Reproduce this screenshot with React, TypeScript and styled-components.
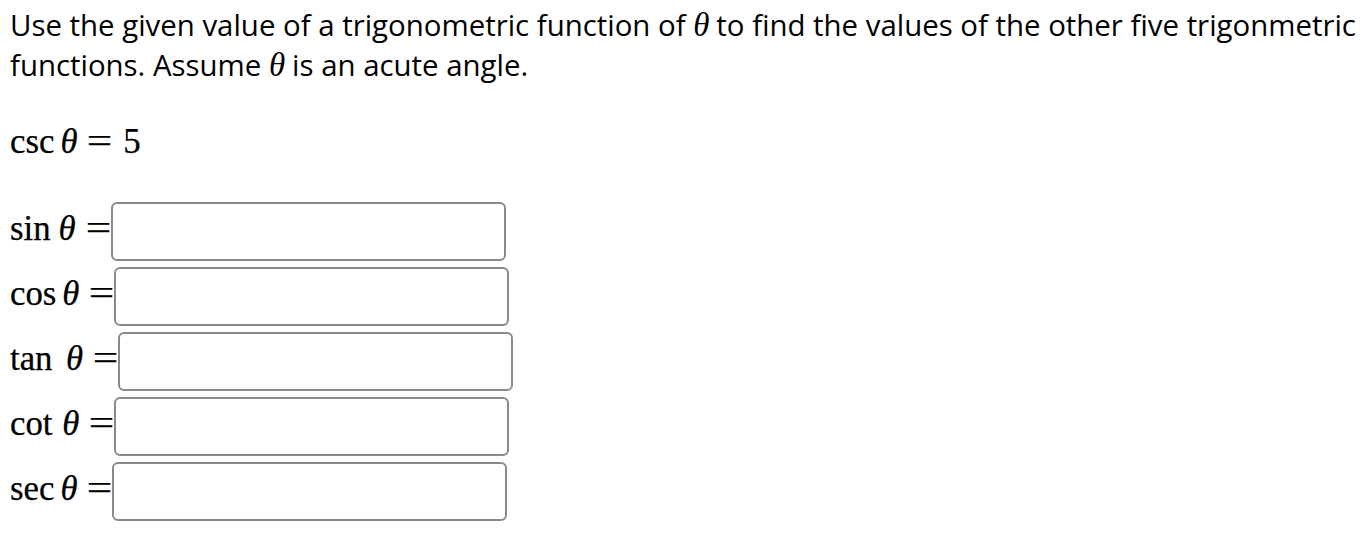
import React from "react";
import styled, { createGlobalStyle } from "styled-components";

const Global = createGlobalStyle`
  html, body { margin: 0; padding: 0; background: #fff; }
  body { font-family: "Open Sans", sans-serif; color: #000; }
`;

const Page = styled.div`
  padding: 5px 10px 0 10px;
`;

const Prompt = styled.p`
  margin: 0;
  font-size: 29.4px;
  line-height: 40px;
  font-family: "Open Sans", sans-serif;
`;

const MathInline = styled.span`
  font-family: "Liberation Serif", "DejaVu Serif", serif;
  font-size: 33px;
  line-height: 0;
`;

const Theta = styled.i`
  font-family: "Liberation Serif", "DejaVu Serif", serif;
  font-style: italic;
  display: inline-block;
  width: 0.469em;
`;

const MathLine = styled.div`
  display: flex;
  align-items: baseline;
  font-family: "Liberation Serif", "DejaVu Serif", serif;
  font-size: 34.8px;
  line-height: 40px;
  white-space: pre;
  -webkit-text-stroke: 0.25px #000;
`;

const Given = styled(MathLine)`
  margin-top: 37px;
`;

const Fn = styled.span<{ $w: number }>`
  display: inline-block;
  width: ${(p) => p.$w}em;
  margin-right: 0.167em;
`;

const Eq = styled.span<{ $after?: boolean }>`
  display: inline-block;
  width: 0.778em;
  margin-left: 0.278em;
  margin-right: ${(p) => (p.$after ? "0.278em" : "0")};
  text-align: center;
  transform: scaleX(1.3);
`;

const Rows = styled.div`
  margin-top: 40px;
  display: flex;
  flex-direction: column;
  gap: 6px;
`;

const Row = styled.div`
  display: flex;
  align-items: center;
  height: 59px;
`;

const Label = styled(MathLine)`
  padding-bottom: 6px;
`;

const Box = styled.input`
  box-sizing: border-box;
  width: 395px;
  height: 59px;
  border: 2px solid #8a8a8a;
  border-radius: 6px;
  background: #fff;
  margin: 0 0 0 -1px;
  padding: 0 8px;
  font-size: 20px;
  outline: none;
`;

const fns: { name: string; w: number }[] = [
  { name: "sin", w: 1.228 },
  { name: "cos", w: 1.338 },
  { name: "tan", w: 1.445 },
  { name: "cot", w: 1.333 },
  { name: "sec", w: 1.282 },
];

export default function App() {
  return (
    <>
      <Global />
      <Page>
        <Prompt>
          Use the given value of a trigonometric function of{" "}
          <MathInline>
            <Theta>θ</Theta>
          </MathInline>{" "}
          to find the values of the other five trigonmetric functions. Assume{" "}
          <MathInline>
            <Theta>θ</Theta>
          </MathInline>{" "}
          is an acute angle.
        </Prompt>
        <Given>
          <Fn $w={1.282}>csc</Fn>
          <Theta>θ</Theta>
          <Eq $after>=</Eq>
          <span>5</span>
        </Given>
        <Rows>
          {fns.map((f) => (
            <Row key={f.name}>
              <Label>
                <Fn $w={f.w}>{f.name}</Fn>
                <Theta>θ</Theta>
                <Eq>=</Eq>
              </Label>
              <Box type="text" aria-label={`${f.name} theta`} />
            </Row>
          ))}
        </Rows>
      </Page>
    </>
  );
}
